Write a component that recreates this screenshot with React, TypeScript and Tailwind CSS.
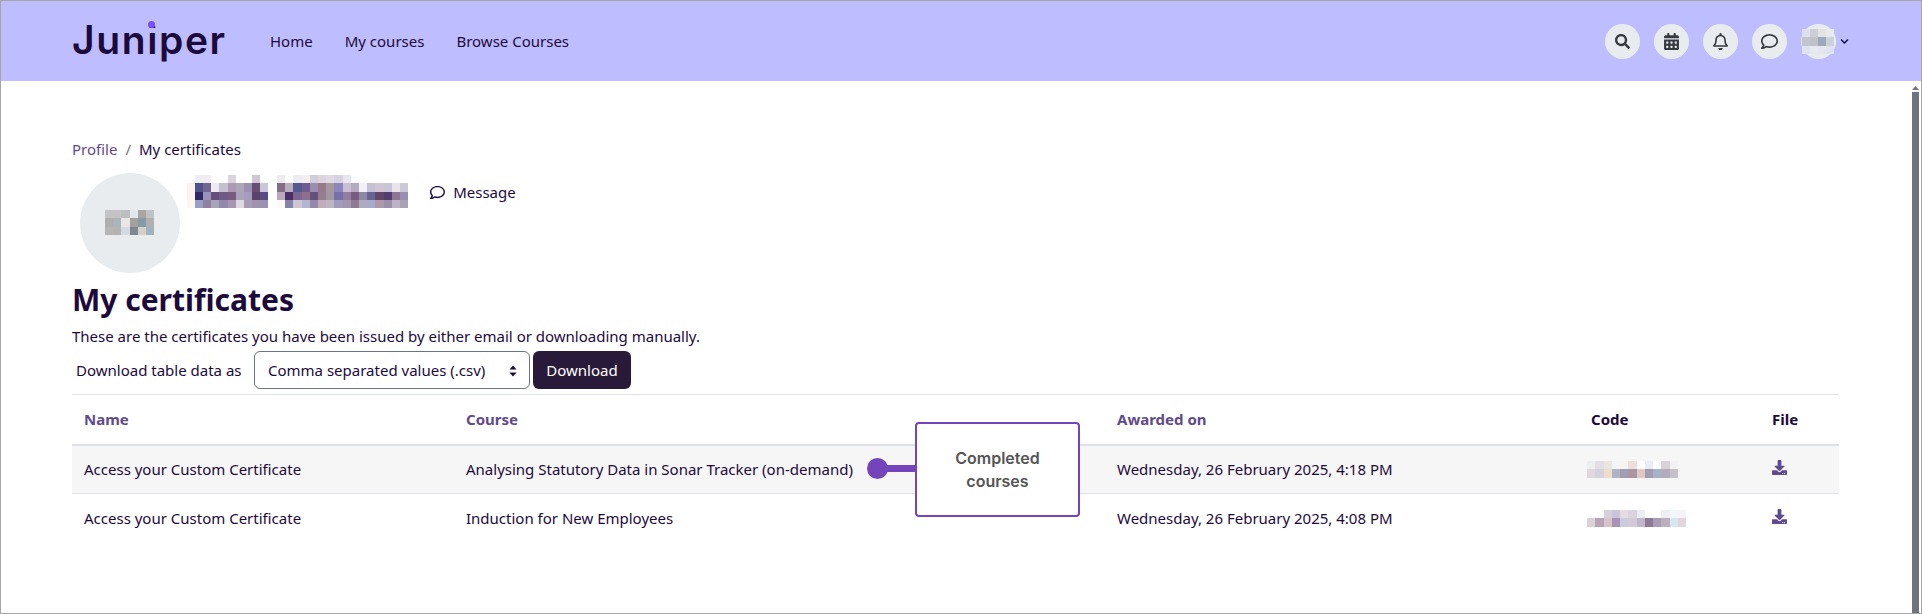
import React from "react";
import { FaSearch, FaCalendarAlt, FaRegBell, FaRegComment, FaChevronDown, FaDownload } from "react-icons/fa";

type Cell = string | null;

function Mosaic({ rows, cw, ch, className }: { rows: Cell[][]; cw: number; ch: number; className?: string }) {
  const cols = Math.max(...rows.map((r) => r.length));
  return (
    <svg width={cols * cw} height={rows.length * ch} className={className} shapeRendering="crispEdges" aria-hidden="true">
      {rows.map((r, y) =>
        r.map((c, x) => (c ? <rect key={`${x}-${y}`} x={x * cw} y={y * ch} width={cw} height={ch} fill={c} /> : null))
      )}
    </svg>
  );
}

const nameA: Cell[][] = [
  [null, "#eeeef4", "#efedf3", null, null, "#dcd3de", null, null, "#cfc5d4", null],
  ["#fbf1ee", "#4f5490", "#71668f", "#efeaf1", "#c4bfd3", "#ab9ab2", "#aba7b8", "#9c8fb2", "#684e72", "#c9c6d9"],
  ["#fbf1ee", "#2e2763", "#9a92ba", "#664e7a", "#6e5a84", "#775c80", "#aaa4bb", "#a79cc0", "#5a4268", "#564b82"],
  ["#fff5f1", "#979fc4", "#8f819f", "#aaa3b7", "#9188ab", "#a897b0", "#dedae0", "#a69db5", "#a193ae", "#9a91b3"],
];
const nameB: Cell[][] = [
  ["#eeecf2", null, "#eeecf3", "#f2eef2", "#d2cdda", "#ddd3dc", "#dfdae3", "#d6d2e2", "#e8e6f2", null, null, null, null, null, null, null],
  ["#856c87", "#b8aec0", "#565890", "#6e5d8e", "#9a8ead", "#967a8f", "#a3999f", "#8d86bd", "#cbbfd4", "#b4a9bf", "#f2f0f6", "#c4c0d5", "#d2c5d3", "#c8c6d6", "#e9e3ea", "#cbc8d8"],
  ["#bba8bc", "#4a2e68", "#7c6690", "#8c7090", "#66507c", "#977d90", "#a298a4", "#7570aa", "#917f9f", "#795d7e", "#8e88a6", "#656595", "#614669", "#533d70", "#8d7694", "#9890b2"],
  ["#fff9f5", "#8484a8", "#cdc5cf", "#b0b6cf", "#9688aa", "#bfadb9", "#bdb8c0", "#a09ac0", "#a596b0", "#8f7a92", "#aeaac0", "#a9abcc", "#ad9aa9", "#9a90a8", "#bcb3c6", "#a8a2b4"],
];
const userMosaic: Cell[][] = [
  ["#c3c3c5", "#c3c3c5", "#bcbec0", "#e0e8ee", "#a8a5a5", "#c0c3c5"],
  ["#afadad", "#a9b5ba", "#e9e6e4", "#a3a09f", "#879aa8", "#b0b0b0"],
  ["#b5b5b5", "#b3b3b1", "#d3dae1", "#7d8790", "#d3cfca", "#a3b3bc"],
];
const headerMosaic: Cell[][] = [
  ["#dee0ec", "#ccced8", "#e4e2e0", "#e8ebee"],
  ["#c3c4cc", "#bfc0c8", "#9ea8bc", "#ccd0d8"],
  ["#dfe2f0", "#e6eaf0", "#e4e6ee", "#dfe1f0"],
];
const code1: Cell[][] = [
  ["#ebeff0", "#e1dee6", "#e9e6e2", "#f1f5f8", "#f6f3f1", "#eadfdd", "#ffffff", "#eaecf4", "#ffffff", "#d8d2d9", "#f3f2f3"],
  ["#e0d8df", "#d4d2de", "#efdcc9", "#aeb4c6", "#a19eb2", "#ab97a4", "#dec9c6", "#a19eb4", "#a8b2c6", "#b2acbe", "#c8bfcc"],
];
const code2: Cell[][] = [
  [null, null, "#d5d0de", "#cbc5d9", "#e6dbe3", "#d9d2df", "#ebecf5", null, null, "#eeeef5", "#eff8fb", "#f7f2f5"],
  ["#dcd2d6", "#b8a4b4", "#d6c4c8", "#a994b8", "#cbcbdf", "#d4c9d6", "#c0b8ca", "#8d7a98", "#a99cb4", "#bcafc0", "#d8e6ef", "#e4d4dc"],
];

const circle = "w-[35px] h-[35px] rounded-full bg-[#e9ecef] flex items-center justify-center text-[#343a40]";
const rows = [
  { name: "Access your Custom Certificate", course: "Analysing Statutory Data in Sonar Tracker (on-demand)", date: "Wednesday, 26 February 2025, 4:18 PM", code: code1, bg: "bg-[#f6f6f7]" },
  { name: "Access your Custom Certificate", course: "Induction for New Employees", date: "Wednesday, 26 February 2025, 4:08 PM", code: code2, bg: "" },
];

export default function App() {
  return (
    <div className="relative w-[1922px] h-[614px] overflow-hidden bg-white border border-[#a6a6a6] text-[#1d0a3c] text-[15px] font-['Noto_Sans','Open_Sans',sans-serif]">
      <header className="h-[80px] bg-[#bdbdff] flex items-center pl-[71px] pr-[72px]">
        <div className="relative w-[198px] h-[80px] flex items-center">
          <span className="text-[39px] leading-none font-semibold tracking-[1.6px] text-[#1d0a3c] font-['Inter',sans-serif] -mt-[3px]">Juniper</span>
          <span className="absolute left-[74px] top-[27px] w-[11px] h-[4px] bg-[#bdbdff]" />
          <span className="absolute left-[76px] top-[20px] w-[7px] h-[7px] rounded-full bg-[#7c4dff]" />
        </div>
        <nav className="flex items-center gap-[32px]">
          <span>Home</span>
          <span>My courses</span>
          <span>Browse Courses</span>
        </nav>
        <div className="ml-auto flex items-center gap-[14px]">
          <div className={circle}><FaSearch size={15} /></div>
          <div className={circle}><FaCalendarAlt size={17} /></div>
          <div className={circle}><FaRegBell size={17} /></div>
          <div className={circle}><FaRegComment size={17} /></div>
          <div className="flex items-center">
            <div className="relative w-[35px] h-[35px] rounded-full bg-[#e9ecef]">
              <Mosaic rows={headerMosaic} cw={8} ch={8.4} className="absolute left-[1px] top-[5px]" />
            </div>
            <FaChevronDown size={9} className="ml-[4px] text-[#0f1040]" />
          </div>
        </div>
      </header>

      <main className="pl-[71px] w-[1838px]">
        <nav className="flex items-center mt-[57px] h-[22px]">
          <span className="text-[#5f4b8b]">Profile</span>
          <span className="mx-[8px] text-[#6c757d]">/</span>
          <span>My certificates</span>
        </nav>
        <div className="flex items-start h-[110px] mt-[11px]">
          <div className="relative ml-[8px] mt-[2px] w-[100px] h-[100px] rounded-full bg-[#e9ecef] flex items-center justify-center">
            <Mosaic rows={userMosaic} cw={8.2} ch={8.4} />
          </div>
          <div className="ml-[7px] mt-[4px] flex">
            <Mosaic rows={nameA} cw={8.1} ch={8.3} />
            <Mosaic rows={nameB} cw={8.2} ch={8.3} className="ml-[9px]" />
          </div>
          <div className="ml-[22px] mt-[9px] h-[24px] flex items-center">
            <FaRegComment size={15} />
            <span className="ml-[8px]">Message</span>
          </div>
        </div>
        <h1 className="text-[30px] leading-[36px] font-bold mt-[1px]">My certificates</h1>
        <p className="mt-[7px] leading-[22px]">These are the certificates you have been issued by either email or downloading manually.</p>
        <div className="flex items-center mt-[4px] h-[38px]">
          <span className="ml-[4px] w-[178px]">Download table data as</span>
          <div className="relative w-[276px] h-[38px] rounded-[6px] border border-[#6c757d] bg-white flex items-center pl-[13px]">
            <span>Comma separated values (.csv)</span>
            <svg className="absolute right-[12px] top-[13px]" width="8" height="12" viewBox="0 0 8 12" aria-hidden="true">
              <path d="M4 0.5 L7.5 4.5 H0.5 Z M4 11.5 L7.5 7.5 H0.5 Z" fill="#1d0a3c" />
            </svg>
          </div>
          <button className="ml-[3px] w-[98px] h-[38px] rounded-[6px] bg-[#2a1a3a] text-white">Download</button>
        </div>
        <table className="mt-[5px] w-[1767px] table-fixed border-collapse text-left border-t border-[#e0e0e8]">
          <colgroup>
            <col className="w-[382px]" />
            <col className="w-[651px]" />
            <col className="w-[474px]" />
            <col className="w-[181px]" />
            <col className="w-[79px]" />
          </colgroup>
          <thead>
            <tr className="h-[50px] border-b-2 border-[#dee2e6]">
              <th className="pl-[12px] font-bold text-[#5f4b8b]">Name</th>
              <th className="pl-[12px] font-bold text-[#5f4b8b]">Course</th>
              <th className="pl-[12px] font-bold text-[#5f4b8b]">Awarded on</th>
              <th className="pl-[12px] font-bold">Code</th>
              <th className="pl-[12px] font-bold">File</th>
            </tr>
          </thead>
          <tbody>
            {rows.map((r, i) => (
              <tr key={i} className={`h-[49px] ${r.bg} ${i === 0 ? "border-b border-[#dee2e6]" : ""}`}>
                <td className="pl-[12px]">{r.name}</td>
                <td className="pl-[12px]">{r.course}</td>
                <td className="pl-[12px]">{r.date}</td>
                <td className="pl-[8px]"><Mosaic rows={r.code} cw={8.25} ch={8.4} className="block" /></td>
                <td className="pl-[12px]"><FaDownload size={15} className="text-[#5f4b8b] -translate-y-[2px]" /></td>
              </tr>
            ))}
          </tbody>
        </table>
      </main>

      <div className="absolute left-[866px] top-[457px] w-[21px] h-[21px] rounded-full bg-[#7444bb]" />
      <div className="absolute left-[880px] top-[464px] w-[36px] h-[7px] bg-[#7444bb]" />
      <div className="absolute left-[914px] top-[421px] w-[165px] h-[95px] rounded-[4px] border-2 border-[#7444bb] bg-white flex items-center justify-center text-center text-[16px] leading-[23px] font-semibold text-[#555555] font-['Inter',sans-serif]">
        <span>Completed<br />courses</span>
      </div>

      <svg className="absolute left-[1911px] top-[85px]" width="7" height="4" viewBox="0 0 7 4" aria-hidden="true">
        <path d="M3.5 0 L7 4 H0 Z" fill="#6c757d" />
      </svg>
      <div className="absolute left-[1911px] top-[91px] w-[7px] bottom-0 bg-[#6c757d]" />
    </div>
  );
}
